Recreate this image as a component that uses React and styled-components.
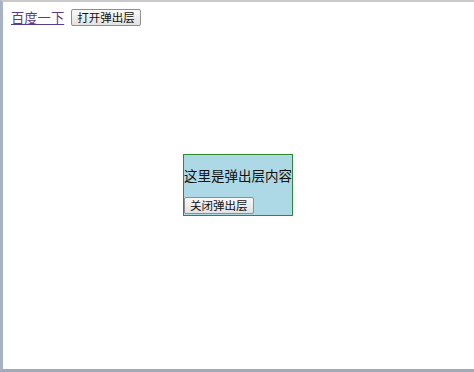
import React, { useState } from "react";
import styled, { createGlobalStyle } from "styled-components";

const GlobalStyle = createGlobalStyle`
  html, body {
    margin: 0;
    padding: 0;
    background: #fff;
  }
  body {
    font-family: "Noto Sans CJK SC", "DejaVu Sans", sans-serif;
  }
`;

function App() {
  const [open, setOpen] = useState(true);

  return (
    <Frame>
      <GlobalStyle />
      <TopBar>
        <Link href="#">百度一下</Link>
        <Button onClick={() => setOpen(true)}>打开弹出层</Button>
      </TopBar>
      {open && (
        <Popup>
          <PopupText>这里是弹出层内容</PopupText>
          <Button onClick={() => setOpen(false)}>关闭弹出层</Button>
        </Popup>
      )}
    </Frame>
  );
}

export default App;

const Frame = styled.div`
  position: relative;
  box-sizing: border-box;
  height: 372px;
  border-top: 2px solid #c9c9c9;
  border-left: 3px solid #a7b3c3;
  border-bottom: 3px solid #9eabbd;
  padding: 6px 8px;
`;

const TopBar = styled.div`
  display: flex;
  align-items: center;
  gap: 7px;
`;

const Link = styled.a`
  font-size: 13.3px;
  line-height: 17px;
  color: #5b3a8e;
  text-decoration: underline;
  padding-top: 1px;
`;

const Button = styled.button`
  box-sizing: border-box;
  height: 17px;
  padding: 0 5px;
  font-family: "Noto Sans CJK SC", "DejaVu Sans", sans-serif;
  font-size: 11.5px;
  line-height: 15px;
  color: #111;
  background: linear-gradient(#f8f8f8, #e2e2e2);
  border: 1px solid #8f8f8f;
  border-radius: 2px;
  cursor: pointer;
  white-space: nowrap;
`;

const Popup = styled.div`
  position: absolute;
  left: 180px;
  top: 152px;
  box-sizing: border-box;
  width: 110px;
  height: 62px;
  background: #add8e6;
  border: 1px solid #2e8b2e;
  display: flex;
  flex-direction: column;
  align-items: flex-start;
  padding-top: 11px;
`;

const PopupText = styled.div`
  font-size: 13.5px;
  line-height: 18px;
  color: #111;
  white-space: nowrap;
  margin-bottom: 13px;
`;
